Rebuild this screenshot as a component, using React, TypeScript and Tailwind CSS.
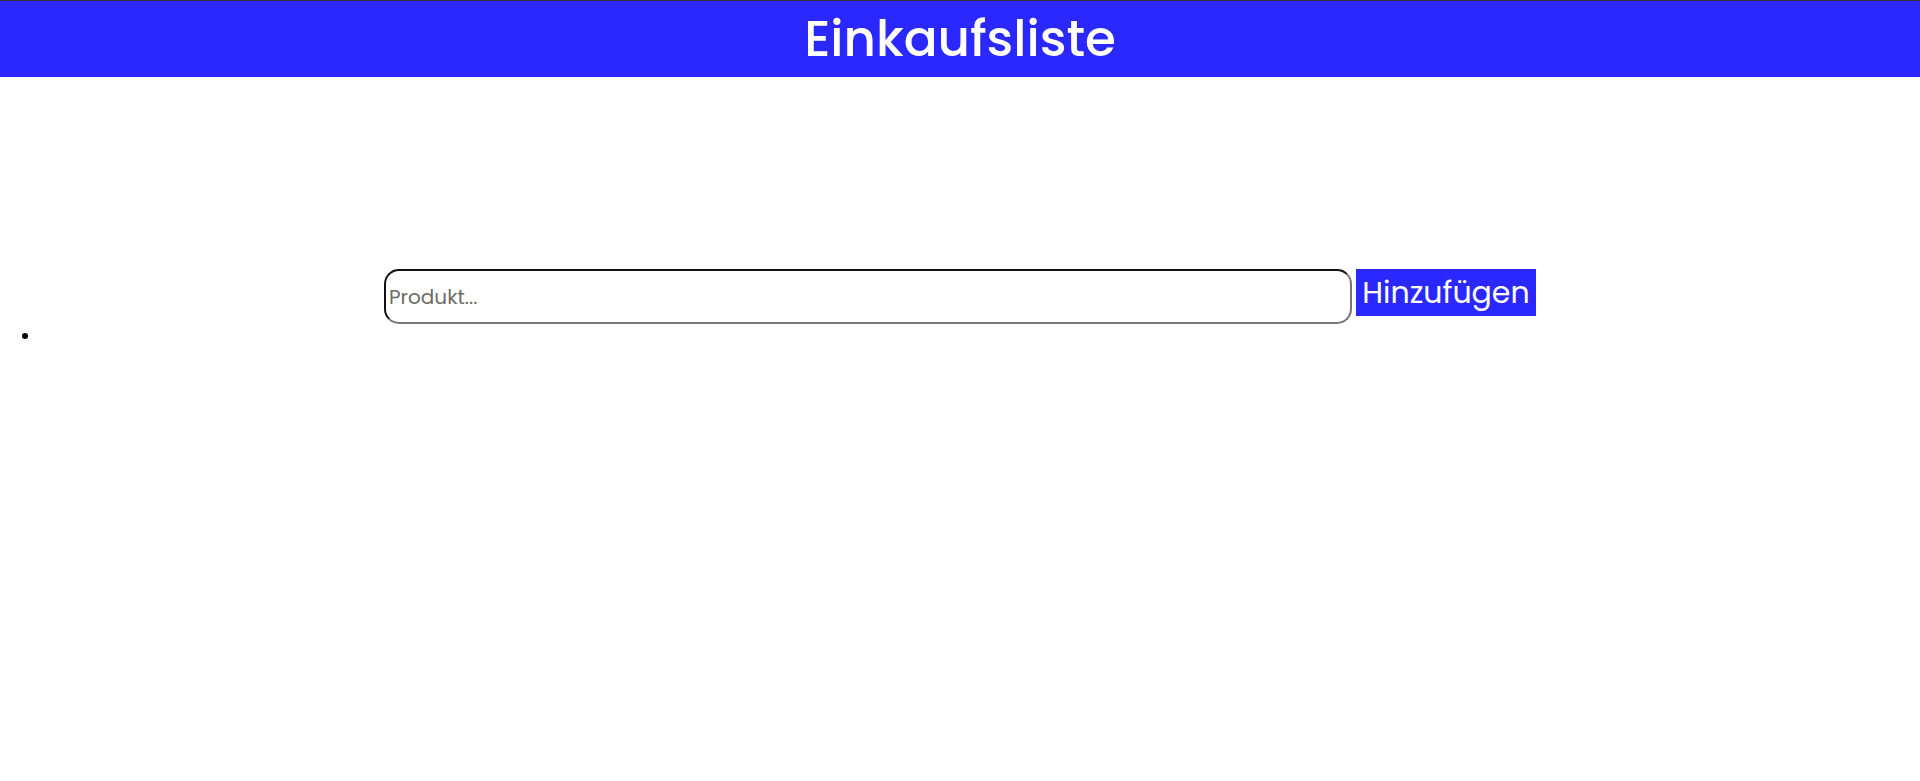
import { useState } from "react";

export default function App() {
  const [items, setItems] = useState<string[]>([""]);
  const [text, setText] = useState("");

  const add = () => {
    if (!text.trim()) return;
    setItems([...items, text.trim()]);
    setText("");
  };

  return (
    <div className="min-h-screen bg-white font-['Poppins','Open_Sans',sans-serif] text-black">
      <header className="flex h-[77px] items-center justify-center border-t border-[#333] bg-[#2a28ff]">
        <h1 className="text-[50px] leading-none font-medium text-white">Einkaufsliste</h1>
      </header>

      <form
        className="mt-[192px] flex items-start justify-center gap-[4px]"
        onSubmit={(e) => {
          e.preventDefault();
          add();
        }}
      >
        <input
          value={text}
          onChange={(e) => setText(e.target.value)}
          placeholder="Produkt..."
          className="h-[55px] w-[968px] rounded-[15px] border-2 border-t-[#111] border-l-[#111] border-r-[#767676] border-b-[#767676] bg-white px-[3px] text-[20px] outline-none placeholder:text-[#6f6a66]"
        />
        <button
          type="submit"
          className="h-[47px] w-[180px] bg-[#2a28ff] text-[30px] leading-none text-white"
        >
          Hinzufügen
        </button>
      </form>

      <ul className="list-disc pl-10 text-base leading-6">
        {items.map((item, i) => (
          <li key={i}>{item}</li>
        ))}
      </ul>
    </div>
  );
}
